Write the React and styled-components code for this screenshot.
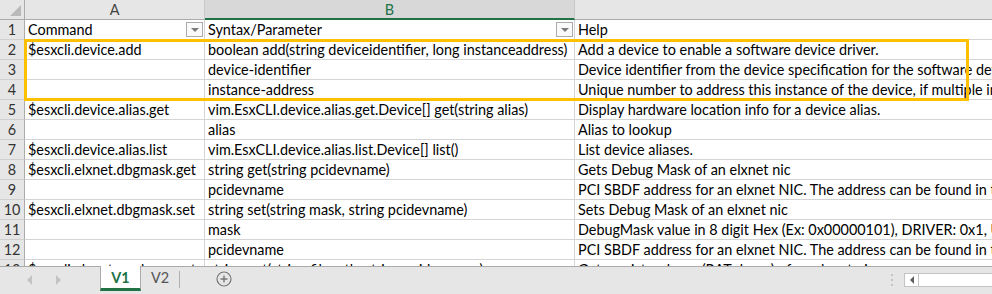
import styled, { createGlobalStyle } from 'styled-components';

const GlobalStyle = createGlobalStyle`
  html, body {
    margin: 0;
    padding: 0;
    background: #ffffff;
    overflow: hidden;
  }
  * {
    box-sizing: border-box;
  }
`;

const rows = [
  { a: 'Command', b: 'Syntax/Parameter', c: 'Help', filter: true },
  { a: '$esxcli.device.add', b: 'boolean add(string deviceidentifier, long instanceaddress)', c: 'Add a device to enable a software device driver.' },
  { a: '', b: 'device-identifier', c: 'Device identifier from the device specification for the software device driver.' },
  { a: '', b: 'instance-address', c: 'Unique number to address this instance of the device, if multiple instances of the same device identifier are added.' },
  { a: '$esxcli.device.alias.get', b: 'vim.EsxCLI.device.alias.get.Device[] get(string alias)', c: 'Display hardware location info for a device alias.' },
  { a: '', b: 'alias', c: 'Alias to lookup' },
  { a: '$esxcli.device.alias.list', b: 'vim.EsxCLI.device.alias.list.Device[] list()', c: 'List device aliases.' },
  { a: '$esxcli.elxnet.dbgmask.get', b: 'string get(string pcidevname)', c: 'Gets Debug Mask of an elxnet nic' },
  { a: '', b: 'pcidevname', c: 'PCI SBDF address for an elxnet NIC. The address can be found in the output of lspci.' },
  { a: '$esxcli.elxnet.dbgmask.set', b: 'string set(string mask, string pcidevname)', c: 'Sets Debug Mask of an elxnet nic' },
  { a: '', b: 'mask', c: 'DebugMask value in 8 digit Hex (Ex: 0x00000101), DRIVER: 0x1, UPLINK: 0x2, QUEUE: 0x4' },
  { a: '', b: 'pcidevname', c: 'PCI SBDF address for an elxnet NIC. The address can be found in the output of lspci.' },
  { a: '$esxcli.elxnet.regdump.get', b: 'string get(string filepath, string pcidevname)', c: 'Gets register dump (RAT dump) of an elxnet nic' },
];

const Sheet = styled.div`
  width: 992px;
  height: 294px;
  display: flex;
  flex-direction: column;
  font-family: Lato, "Liberation Sans", sans-serif;
  font-size: 14.4px;
  color: #000;
  overflow: hidden;
`;

const Grid = styled.div`
  position: relative;
  height: 266px;
  flex-shrink: 0;
  overflow: hidden;
`;

const Row = styled.div`
  display: grid;
  grid-template-columns: 25px 180px 370px 900px;
  height: 20px;
`;

const Corner = styled.div`
  position: relative;
  background: #e6e6e6;
  border-right: 1px solid #ababab;
  border-bottom: 1px solid #ababab;

  &::after {
    content: '';
    position: absolute;
    right: 3px;
    bottom: 3px;
    border-style: solid;
    border-width: 0 0 11px 11px;
    border-color: transparent transparent #b9b9b9 transparent;
  }
`;

const ColHead = styled.div`
  display: flex;
  align-items: center;
  justify-content: center;
  background: ${p => (p.$active ? '#d8d8d8' : '#e6e6e6')};
  color: ${p => (p.$active ? '#217346' : '#444')};
  border-right: 1px solid #c8c8c8;
  border-bottom: ${p => (p.$active ? '2px solid #217346' : '1px solid #ababab')};
  line-height: 17px;
`;

const RowHead = styled.div`
  display: flex;
  align-items: flex-end;
  justify-content: center;
  background: #e6e6e6;
  color: #333;
  border-right: 1px solid #ababab;
  border-bottom: 1px solid #d0d0d0;
  line-height: 17px;
  padding-bottom: 1px;
`;

const Cell = styled.div`
  display: flex;
  align-items: flex-end;
  padding: 0 1px 1px 3px;
  border-right: 1px solid #d4d4d4;
  border-bottom: 1px solid #d4d4d4;
  white-space: nowrap;
  line-height: 17px;
  overflow: hidden;
`;

const Text = styled.span`
  flex: 1;
`;

const FilterButton = styled.span`
  width: 17px;
  height: 15px;
  margin-bottom: 1px;
  border: 1px solid #ababab;
  background: #fafafa;
  display: flex;
  align-items: center;
  justify-content: center;

  &::before {
    content: '';
    border-style: solid;
    border-width: 4px 4px 0 4px;
    border-color: #7a7a7a transparent transparent transparent;
  }
`;

const Highlight = styled.div`
  position: absolute;
  left: 24px;
  top: 39px;
  width: 945px;
  height: 62px;
  border: 3px solid #ffc000;
  pointer-events: none;
`;

const TabBar = styled.div`
  height: 28px;
  flex-shrink: 0;
  display: flex;
  align-items: stretch;
  background: #e6e6e6;
  border-top: 1px solid #ababab;
`;

const Nav = styled.div`
  width: 100px;
  display: flex;
  align-items: center;
  padding-left: 27px;
  padding-bottom: 2px;
  gap: 24px;
`;

const Arrow = styled.span`
  width: 0;
  height: 0;
  border-style: solid;
  border-width: ${p => (p.$dir === 'left' ? '5px 5px 5px 0' : '5px 0 5px 5px')};
  border-color: ${p =>
    p.$dir === 'left'
      ? 'transparent #c4c4c4 transparent transparent'
      : 'transparent transparent transparent #c4c4c4'};
`;

const Tab = styled.div`
  width: ${p => p.$w}px;
  display: flex;
  align-items: center;
  justify-content: center;
  font-size: 14.4px;
  font-weight: ${p => (p.$active ? 700 : 400)};
  color: ${p => (p.$active ? '#217346' : '#555')};
  background: ${p => (p.$active ? '#ffffff' : 'transparent')};
  border-left: ${p => (p.$active ? '1px solid #ababab' : 'none')};
  border-right: ${p => (p.$active ? '1px solid #ababab' : 'none')};
  border-bottom: ${p => (p.$active ? '3px solid #217346' : '3px solid transparent')};
  margin-top: -1px;
  margin-bottom: 3px;
`;

const Divider = styled.div`
  width: 1px;
  margin: 4px 0 6px;
  background: #b0b0b0;
`;

const AddSheet = styled.div`
  width: 88px;
  display: flex;
  align-items: center;
  justify-content: center;
  padding-bottom: 3px;
`;

const Spacer = styled.div`
  flex: 1;
`;

const Grip = styled.div`
  width: 24px;
  display: flex;
  flex-direction: column;
  align-items: center;
  justify-content: center;
  gap: 3px;
  padding-bottom: 2px;

  span {
    width: 2px;
    height: 2px;
    background: #c4c4c4;
  }
`;

const ScrollBar = styled.div`
  width: 88px;
  height: 14px;
  align-self: center;
  margin-bottom: 2px;
  display: flex;
  background: #ffffff;
  border: 1px solid #c4c4c4;
  border-right: none;
`;

const ScrollButton = styled.div`
  width: 14px;
  display: flex;
  align-items: center;
  justify-content: center;
  border-right: 1px solid #c4c4c4;

  &::before {
    content: '';
    border-style: solid;
    border-width: 4px 4px 4px 0;
    border-color: transparent #606060 transparent transparent;
  }
`;

const PlusIcon = () => (
  <svg width="16" height="16" viewBox="0 0 16 16">
    <circle cx="8" cy="8" r="7" fill="none" stroke="#777" strokeWidth="1.2" />
    <path d="M8 4.5v7M4.5 8h7" stroke="#777" strokeWidth="1.4" />
  </svg>
);

export default function App() {
  return (
    <>
      <GlobalStyle />
      <Sheet>
        <Grid>
          <Row>
            <Corner />
            <ColHead>A</ColHead>
            <ColHead $active>B</ColHead>
            <ColHead>C</ColHead>
          </Row>
          {rows.map((r, i) => (
            <Row key={i}>
              <RowHead>{i + 1}</RowHead>
              <Cell>
                <Text>{r.a}</Text>
                {r.filter && <FilterButton />}
              </Cell>
              <Cell>
                <Text>{r.b}</Text>
                {r.filter && <FilterButton />}
              </Cell>
              <Cell>{r.c}</Cell>
            </Row>
          ))}
          <Highlight />
        </Grid>
        <TabBar>
          <Nav>
            <Arrow $dir="left" />
            <Arrow $dir="right" />
          </Nav>
          <Tab $active $w={41}>V1</Tab>
          <Tab $w={38}>V2</Tab>
          <Divider />
          <AddSheet>
            <PlusIcon />
          </AddSheet>
          <Spacer />
          <Grip>
            <span />
            <span />
            <span />
          </Grip>
          <ScrollBar>
            <ScrollButton />
          </ScrollBar>
        </TabBar>
      </Sheet>
    </>
  );
}
